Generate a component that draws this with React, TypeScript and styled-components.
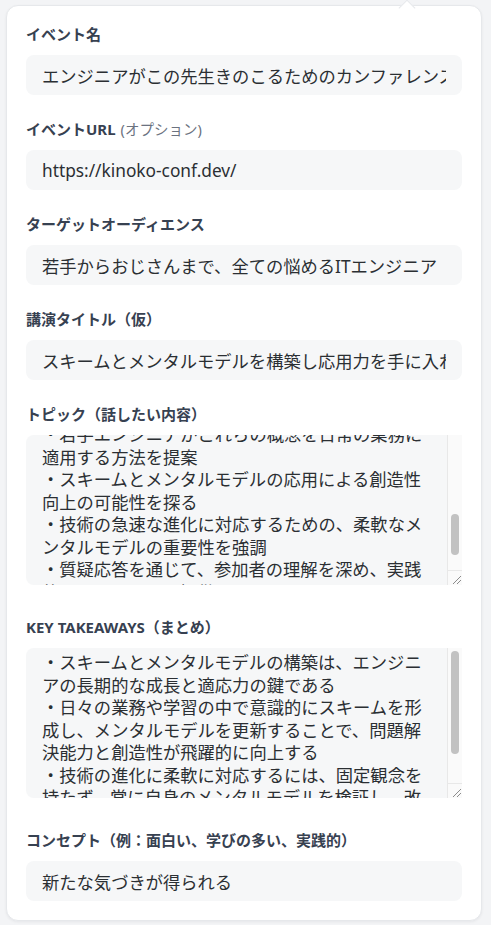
import React, { useLayoutEffect, useRef, useState } from "react";
import styled, { createGlobalStyle } from "styled-components";

const GlobalStyle = createGlobalStyle`
  html, body {
    margin: 0;
    padding: 0;
    background: #f3f4f6;
    font-family: "Noto Sans", "Noto Sans CJK JP", sans-serif;
  }
  * {
    box-sizing: border-box;
  }
`;

const Page = styled.div`
  padding: 5px 9px 0 6px;
  height: 925px;
  overflow: hidden;
`;

const Card = styled.form`
  position: relative;
  background: #fff;
  border: 1px solid #e6e8eb;
  border-radius: 12px;
  box-shadow: 0 1px 3px rgba(15, 23, 42, 0.06);
  padding: 18px 19px 19px;
  display: flex;
  flex-direction: column;
  gap: 24px;
`;

const Arrow = styled.span`
  position: absolute;
  top: -4px;
  right: 68px;
  width: 12px;
  height: 12px;
  background: #fff;
  border-top: 1px solid #e6e8eb;
  border-left: 1px solid #e6e8eb;
  transform: rotate(45deg);
`;

const Field = styled.div`
  display: flex;
  flex-direction: column;
  gap: 10px;
`;

const Label = styled.label`
  font-size: 15px;
  line-height: 21px;
  font-weight: 700;
  color: #374151;
`;

const Hint = styled.span`
  font-size: 14.5px;
  font-weight: 400;
  color: #6b7280;
  margin-left: 5px;
`;

const Input = styled.input`
  display: block;
  width: 100%;
  height: 40px;
  border: none;
  outline: none;
  border-radius: 8px;
  background: #f6f7f8;
  padding: 0 16px;
  font-family: inherit;
  font-size: 17.3px;
  color: #2b2f33;
`;

const Scroller = styled.div`
  position: relative;
  margin-bottom: 8px;
`;

const TextArea = styled.textarea`
  display: block;
  width: 100%;
  height: 150px;
  border: none;
  outline: none;
  border-radius: 8px 0 0 8px;
  background: #f6f7f8;
  padding: 4px 31px 4px 16px;
  font-family: inherit;
  font-size: 17.3px;
  line-height: 22.5px;
  color: #2b2f33;
  resize: vertical;
`;

const Track = styled.div`
  position: absolute;
  top: 0;
  right: 0;
  bottom: 15px;
  width: 15px;
  background: #fafafa;
  border-left: 1px solid #e8e8e8;
  pointer-events: none;
`;

const Thumb = styled.div`
  position: absolute;
  left: 3px;
  width: 8px;
  border-radius: 4px;
  background: #c2c2c2;
`;

const Corner = styled.div`
  position: absolute;
  right: 0;
  bottom: 0;
  width: 15px;
  height: 15px;
  background: #fafafa;
  border-left: 1px solid #e8e8e8;
  border-top: 1px solid #e8e8e8;
  pointer-events: none;

  svg {
    display: block;
  }
`;

const topic = [
  "・スキームとメンタルモデルの基本概念と、その違いをわかりやすく解説",
  "・人が新しい知識を学ぶときに頭の中で何が起きているのかを、認知科学の知見から紹介",
  "・エンジニアがキャリアの中で直面する課題を、スキームとメンタルモデルの視点から分析",
  "・具体的な事例を通じて、スキームの形成とメンタルモデルの更新プロセスを紹介",
  "・ベテランエンジニアが長年の経験で培ってきた思考の枠組みを言語化",
  "・チーム内でメンタルモデルを共有し、認識のずれを減らすための工夫",
  "・若手エンジニアがこれらの概念を日常の業務に適用する方法を提案",
  "・スキームとメンタルモデルの応用による創造性向上の可能性を探る",
  "・技術の急速な進化に対応するための、柔軟なメンタルモデルの重要性を強調",
  "・質疑応答を通じて、参加者の理解を深め、実践的なアドバイスを提供",
  "・講演資料と参考文献を共有",
].join("\n");

const takeaways = [
  "・スキームとメンタルモデルの構築は、エンジニアの長期的な成長と適応力の鍵である",
  "・日々の業務や学習の中で意識的にスキームを形成し、メンタルモデルを更新することで、問題解決能力と創造性が飛躍的に向上する",
  "・技術の進化に柔軟に対応するには、固定観念を持たず、常に自身のメンタルモデルを検証し、改善していく姿勢が重要である",
].join("\n");

type Props = { value: string; fromBottom?: number };

function ScrollText({ value, fromBottom }: Props) {
  const ref = useRef<HTMLTextAreaElement>(null);
  const [thumb, setThumb] = useState({ top: 3, height: 0 });

  const measure = () => {
    const el = ref.current;
    if (!el) return;
    const track = el.clientHeight - 15 - 6;
    const height = Math.max(20, (track * el.clientHeight) / el.scrollHeight);
    const max = el.scrollHeight - el.clientHeight;
    const top = 3 + (max > 0 ? ((track - height) * el.scrollTop) / max : 0);
    setThumb({ top, height });
  };

  useLayoutEffect(() => {
    const el = ref.current;
    if (el && fromBottom !== undefined) {
      el.scrollTop = el.scrollHeight - el.clientHeight - fromBottom;
    }
    measure();
  }, []);

  return (
    <Scroller>
      <TextArea ref={ref} defaultValue={value} onScroll={measure} />
      <Track>
        {thumb.height > 0 && (
          <Thumb style={{ top: thumb.top, height: thumb.height }} />
        )}
      </Track>
      <Corner>
        <svg width="14" height="14" viewBox="0 0 14 14">
          <path d="M5 13L13 5M9 13L13 9" stroke="#8c8c8c" strokeWidth="1" />
        </svg>
      </Corner>
    </Scroller>
  );
}

export default function App() {
  return (
    <>
      <GlobalStyle />
      <Page>
        <Card onSubmit={(e) => e.preventDefault()}>
          <Arrow />
          <Field>
            <Label>イベント名</Label>
            <Input defaultValue="エンジニアがこの先生きのこるためのカンファレンス2025" />
          </Field>
          <Field>
            <Label>
              イベントURL<Hint>(オプション)</Hint>
            </Label>
            <Input defaultValue="https://kinoko-conf.dev/" />
          </Field>
          <Field>
            <Label>ターゲットオーディエンス</Label>
            <Input defaultValue="若手からおじさんまで、全ての悩めるITエンジニア" />
          </Field>
          <Field>
            <Label>講演タイトル（仮）</Label>
            <Input defaultValue="スキームとメンタルモデルを構築し応用力を手に入れる" />
          </Field>
          <Field>
            <Label>トピック（話したい内容）</Label>
            <ScrollText value={topic} fromBottom={46} />
          </Field>
          <Field>
            <Label>KEY TAKEAWAYS（まとめ）</Label>
            <ScrollText value={takeaways} />
          </Field>
          <Field>
            <Label>コンセプト（例：面白い、学びの多い、実践的）</Label>
            <Input defaultValue="新たな気づきが得られる" />
          </Field>
        </Card>
      </Page>
    </>
  );
}
